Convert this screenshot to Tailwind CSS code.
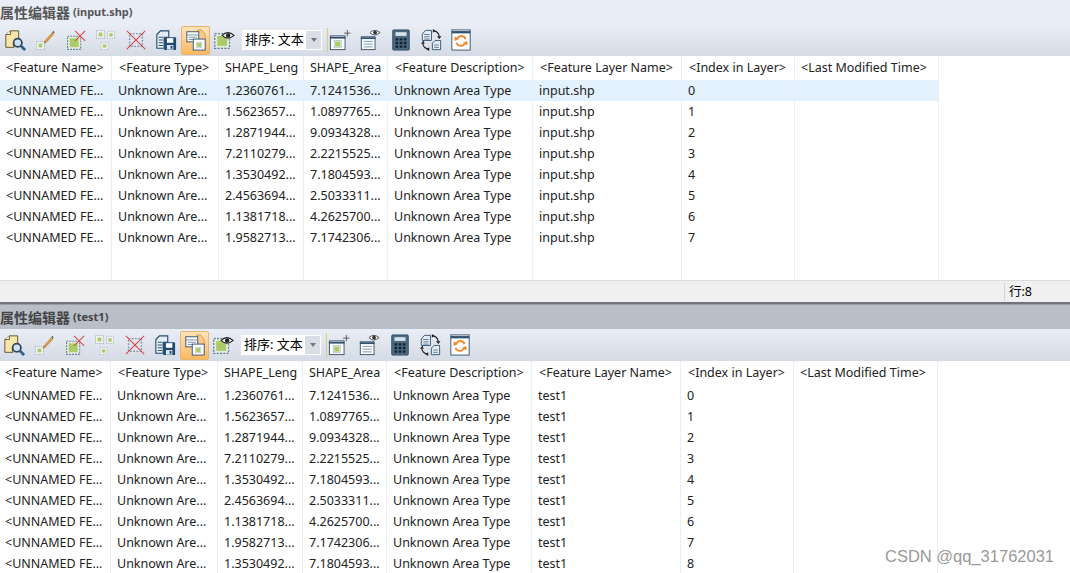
<!DOCTYPE html>
<html><head><meta charset="utf-8"><script src="https://cdn.jsdelivr.net/npm/@tailwindcss/browser@4"></script></head>
<body class="w-[1070px] h-[573px] overflow-hidden bg-white font-['Noto_Sans','Noto_Sans_CJK_SC',sans-serif] text-[12.5px] text-[#222]">
<svg class="hidden">
<symbol id="dots" viewBox="0 0 10 10"><rect x=".5" y=".5" width="9" height="9" fill="#e6ebe0" stroke="#5f7d9c" stroke-width=".8" stroke-dasharray="1.2 .8"/><rect x="2" y="2" width="6" height="6" fill="#a9cc68"/></symbol>
<symbol id="dotsl" viewBox="0 0 10 10"><rect x=".5" y=".5" width="9" height="9" fill="#eef1ea" stroke="#8aa2b8" stroke-width=".8" stroke-dasharray="1.2 .8"/><rect x="3" y="3" width="4" height="4" fill="#a9cc68"/></symbol>
<symbol id="i1" viewBox="0 0 24 24"><path d="M2 6 7 2h9v9a6 6 0 0 0-5 9H2z" fill="#f7e6a8" stroke="#5c5030"/><path d="M2 6h5V2" fill="#fdf6d8" stroke="#5c5030"/><circle cx="15" cy="15" r="4.500" fill="#cfe3f2" stroke="#33475e" stroke-width="2"/><path d="m18 18 5 5" stroke="#2d5f88" stroke-width="3"/></symbol>
<symbol id="i2" viewBox="0 0 24 24"><use href="#dotsl" x="2" y="13" width="10" height="10"/><path d="m12 13 8-9 1.500 1.500-8 9-2.500 1z" fill="#f0a23a" stroke="#8a5a20" stroke-width=".6"/><path d="m20 3.500 1-1.500 1.500 1.500-1 1.500z" fill="#555"/></symbol>
<symbol id="i3" viewBox="0 0 24 24"><use href="#dots" x="2" y="7" width="16" height="16"/><path d="m11 2 11 11M22 2 11 13" stroke="#d9454a" stroke-width="1.100"/></symbol>
<symbol id="i4" viewBox="0 0 24 24"><use href="#dotsl" x="1" y="1" width="10" height="10"/><use href="#dotsl" x="13" y="2" width="9" height="9"/><use href="#dotsl" x="6" y="14" width="9" height="9"/></symbol>
<symbol id="i5" viewBox="0 0 24 24"><rect x="5" y="5" width="14" height="14" fill="none" stroke="#7b97ae" stroke-width="1.500" stroke-dasharray="2 1.500"/><path d="m2 2 20 20M22 2 2 22" stroke="#dc3f45" stroke-width="1.100"/></symbol>
<symbol id="i6" viewBox="0 0 24 24"><path d="M2 6 6 2h9v7h-5v12H2z" fill="#e5edf4" stroke="#244a6c" stroke-width="1.200"/><path d="M4 9h5M4 12h5M4 15h5M4 18h5" stroke="#244a6c"/><rect x="10" y="9" width="13" height="14" rx="1" fill="#1f4b73"/><rect x="13" y="10" width="7" height="5" fill="#fff"/><rect x="13" y="17.500" width="7" height="5" fill="#dfe7ee"/><rect x="17" y="18.500" width="2" height="3" fill="#1f4b73"/></symbol>
<symbol id="i7" viewBox="0 0 24 24"><path d="M14 1h4l4 5v7h-8z" fill="#f8c98a" stroke="#d99a50"/><rect x="2" y="3" width="13" height="11" fill="#fff" stroke="#33516e"/><path d="M2 6.500h13M4 9h9M4 11.500h9" stroke="#6f8ea8"/><rect x="9" y="11" width="13" height="12" fill="#fff" stroke="#33516e"/><use href="#dots" x="12" y="14" width="7" height="7"/></symbol>
<symbol id="i8" viewBox="0 0 24 24"><use href="#dots" x="1" y="4" width="18" height="18"/><path d="M10 7q6-6 13 0-7 6-13 0z" fill="#fff" stroke="#222" stroke-width="1.300"/><circle cx="16.500" cy="7" r="2.400" fill="#222"/></symbol>
<symbol id="i9" viewBox="0 0 24 24"><rect x="1.500" y="7.500" width="16" height="15" fill="#fff" stroke="#33516e"/><path d="M1 9.500h17" stroke="#33516e" stroke-width="2"/><use href="#dots" x="5" y="12" width="9" height="9"/><path d="M20 1v7M16.500 4.500h7" stroke="#555"/></symbol>
<symbol id="i10" viewBox="0 0 24 24"><rect x="2.500" y="8.500" width="15" height="14" fill="#fff" stroke="#33516e"/><path d="M2 10h16" stroke="#33516e" stroke-width="2"/><path d="M5 13.500h10M5 16.500h10M5 19.500h10" stroke="#6f8ea8"/><path d="M12 4q5-5 11 0-6 5-11 0z" fill="#fff" stroke="#444"/><circle cx="17.500" cy="3.800" r="2" fill="#333"/></symbol>
<symbol id="i11" viewBox="0 0 24 24"><rect x="3" y="1" width="18" height="22" rx="1" fill="#4d6b80" stroke="#2f4a5e"/><rect x="6" y="3.500" width="12" height="4" fill="#d8e4ec"/><path d="M6 10h3v2.500H6zM10.500 10h3v2.500h-3zM15 10h3v2.500h-3zM6 14h3v2.500H6zM10.500 14h3v2.500h-3zM15 14h3v2.500h-3zM6 18h3v2.500H6zM10.500 18h3v2.500h-3zM15 18h3v2.500h-3z" fill="#10222f"/></symbol>
<symbol id="i12" viewBox="0 0 24 24"><path d="M2.500 5.500 6 1.500h6.500v11h-10z" fill="#e5edf4" stroke="#33516e"/><path d="M4.500 6h6M4.500 8.500h6M4.500 11h6" stroke="#33516e" stroke-width=".8"/><path d="M13.500 15.500l3-3h6v10h-9z" fill="#e5edf4" stroke="#33516e"/><path d="M15.500 17.500h5M15.500 20h5" stroke="#33516e" stroke-width=".8"/><path d="M15 2q5 .5 6 6M10 22q-6-.5-7-6" fill="none" stroke="#222" stroke-width="1.200"/><path d="m18.500 8 5 0-2.500 3zM1 16h4l-1-3.500zM14 0v4l3-2zM10 20v4l-3-2z" fill="#222"/></symbol>
<symbol id="i13" viewBox="0 0 24 24"><rect x="2" y="1" width="20" height="22" fill="#fff" stroke="#33516e"/><path d="M2 3.500h20" stroke="#33516e" stroke-width="2.500"/><path d="M17 11a5 5 0 0 0-9-1M7 15a5 5 0 0 0 9 1" fill="none" stroke="#f0882a" stroke-width="2"/><path d="m5 8 5 3-5 2zM19 18l-5-3 5-2z" fill="#f0882a"/></symbol>
</svg>

<!-- panel 1 -->
<section class="h-[302px] flex flex-col">
  <div class="h-[24px] bg-[#e9edf6] flex items-center font-bold text-[#555] shrink-0"><span class="text-[14px]">属性编辑器</span><span class="text-[11px] ml-[3px] pt-[1px]">(input.shp)</span></div>
  <div class="h-[32px] bg-gradient-to-b from-[#e9edf6] to-[#d5dbe5] flex items-center pl-[3px] shrink-0">
    <svg class="w-[22px] h-[22px] ml-[1px]"><use href="#i1"/></svg>
    <svg class="w-[22px] h-[22px] ml-[8px]"><use href="#i2"/></svg>
    <svg class="w-[22px] h-[22px] ml-[9px]"><use href="#i3"/></svg>
    <svg class="w-[22px] h-[22px] ml-[8px]"><use href="#i4"/></svg>
    <svg class="w-[22px] h-[22px] ml-[8px]"><use href="#i5"/></svg>
    <svg class="w-[22px] h-[22px] ml-[8px]"><use href="#i6"/></svg>
    <span class="ml-[4px] w-[29px] h-[29px] flex items-center justify-center rounded-[2px] border border-[#e8b56f] bg-gradient-to-b from-[#fde4b8] to-[#fbb95f]"><svg class="w-[22px] h-[22px] shrink-0"><use href="#i7"/></svg></span>
    <svg class="w-[22px] h-[22px] ml-[3px]"><use href="#i8"/></svg>
    <span class="ml-[7px] w-[80px] h-[20px] bg-white flex items-center justify-between pl-[3px] pr-[1px] text-[13px] text-black">排序: 文本<span class="w-[15px] h-[18px] bg-[#d9dde4] flex items-center justify-center"><span class="border-x-[3px] border-x-transparent border-t-[4px] border-t-[#777]"></span></span></span>
    <span class="ml-[5px] w-[1px] h-[24px] bg-[#d6cf6f]"></span>
    <svg class="w-[22px] h-[22px] ml-[1px]"><use href="#i9"/></svg>
    <svg class="w-[22px] h-[22px] ml-[8px]"><use href="#i10"/></svg>
    <svg class="w-[22px] h-[22px] ml-[9px]"><use href="#i11"/></svg>
    <svg class="w-[22px] h-[22px] ml-[8px]"><use href="#i12"/></svg>
    <svg class="w-[22px] h-[22px] ml-[8px]"><use href="#i13"/></svg>
  </div>
  <div class="flex-1 w-[939px] grid grid-cols-[112px_107px_85px_84px_145px_149px_113px_144px] grid-rows-[24px_repeat(8,21px)_1fr] [&>*]:border-r [&>*]:border-[#e8eff8] [&>*]:pl-[6px] [&>*]:leading-[21px] [&>*]:whitespace-nowrap [&>*]:overflow-hidden">
    <div class="leading-[24px]!">&lt;Feature Name&gt;</div><div class="leading-[24px]! pl-[7px]!">&lt;Feature Type&gt;</div><div class="leading-[24px]!">SHAPE_Leng</div><div class="leading-[24px]!">SHAPE_Area</div><div class="leading-[24px]! pl-[7px]!">&lt;Feature Description&gt;</div><div class="leading-[24px]! pl-[7px]!">&lt;Feature Layer Name&gt;</div><div class="leading-[24px]! pl-[7px]!">&lt;Index in Layer&gt;</div><div class="leading-[24px]!">&lt;Last Modified Time&gt;</div>
    <div class="bg-[#e3f1fc]">&lt;UNNAMED FE...</div><div class="bg-[#e3f1fc]">Unknown Are...</div><div class="bg-[#e3f1fc]">1.2360761...</div><div class="bg-[#e3f1fc]">7.1241536...</div><div class="bg-[#e3f1fc]">Unknown Area Type</div><div class="bg-[#e3f1fc]">input.shp</div><div class="bg-[#e3f1fc]">0</div><div class="bg-[#e3f1fc]"></div>
    <div>&lt;UNNAMED FE...</div><div>Unknown Are...</div><div>1.5623657...</div><div>1.0897765...</div><div>Unknown Area Type</div><div>input.shp</div><div>1</div><div></div>
    <div>&lt;UNNAMED FE...</div><div>Unknown Are...</div><div>1.2871944...</div><div>9.0934328...</div><div>Unknown Area Type</div><div>input.shp</div><div>2</div><div></div>
    <div>&lt;UNNAMED FE...</div><div>Unknown Are...</div><div>7.2110279...</div><div>2.2215525...</div><div>Unknown Area Type</div><div>input.shp</div><div>3</div><div></div>
    <div>&lt;UNNAMED FE...</div><div>Unknown Are...</div><div>1.3530492...</div><div>7.1804593...</div><div>Unknown Area Type</div><div>input.shp</div><div>4</div><div></div>
    <div>&lt;UNNAMED FE...</div><div>Unknown Are...</div><div>2.4563694...</div><div>2.5033311...</div><div>Unknown Area Type</div><div>input.shp</div><div>5</div><div></div>
    <div>&lt;UNNAMED FE...</div><div>Unknown Are...</div><div>1.1381718...</div><div>4.2625700...</div><div>Unknown Area Type</div><div>input.shp</div><div>6</div><div></div>
    <div>&lt;UNNAMED FE...</div><div>Unknown Are...</div><div>1.9582713...</div><div>7.1742306...</div><div>Unknown Area Type</div><div>input.shp</div><div>7</div><div></div>
    <div></div><div></div><div></div><div></div><div></div><div></div><div></div><div></div>
  </div>
  <div class="h-[22px] shrink-0 bg-[#f0f0f0] border-t border-[#dcdcdc] flex justify-end items-center pr-[4px]"><span class="w-[62px] h-[18px] border-l border-[#d4d4d4] pl-[4px] leading-[18px] text-black">行:8</span></div>
</section>
<div class="h-[3px] bg-[#6f7278] border-b border-[#9a9da3]"></div>

<!-- panel 2 -->
<section class="-ml-[1px] h-[268px] overflow-hidden flex flex-col relative">
  <div class="h-[24px] ml-[1px] bg-[#b8bfc9] flex items-center font-bold text-[#444] shrink-0"><span class="text-[14px]">属性编辑器</span><span class="text-[11px] ml-[3px] pt-[1px]">(test1)</span></div>
  <div class="h-[32px] ml-[1px] bg-gradient-to-b from-[#e9edf6] to-[#d5dbe5] flex items-center pl-[2px] shrink-0">
    <svg class="w-[22px] h-[22px] ml-[1px]"><use href="#i1"/></svg>
    <svg class="w-[22px] h-[22px] ml-[8px]"><use href="#i2"/></svg>
    <svg class="w-[22px] h-[22px] ml-[9px]"><use href="#i3"/></svg>
    <svg class="w-[22px] h-[22px] ml-[8px]"><use href="#i4"/></svg>
    <svg class="w-[22px] h-[22px] ml-[8px]"><use href="#i5"/></svg>
    <svg class="w-[22px] h-[22px] ml-[8px]"><use href="#i6"/></svg>
    <span class="ml-[4px] w-[29px] h-[29px] flex items-center justify-center rounded-[2px] border border-[#e8b56f] bg-gradient-to-b from-[#fde4b8] to-[#fbb95f]"><svg class="w-[22px] h-[22px] shrink-0"><use href="#i7"/></svg></span>
    <svg class="w-[22px] h-[22px] ml-[3px]"><use href="#i8"/></svg>
    <span class="ml-[7px] w-[80px] h-[20px] bg-white flex items-center justify-between pl-[3px] pr-[1px] text-[13px] text-black">排序: 文本<span class="w-[15px] h-[18px] bg-[#d9dde4] flex items-center justify-center"><span class="border-x-[3px] border-x-transparent border-t-[4px] border-t-[#777]"></span></span></span>
    <span class="ml-[5px] w-[1px] h-[24px] bg-[#d6cf6f]"></span>
    <svg class="w-[22px] h-[22px] ml-[1px]"><use href="#i9"/></svg>
    <svg class="w-[22px] h-[22px] ml-[8px]"><use href="#i10"/></svg>
    <svg class="w-[22px] h-[22px] ml-[9px]"><use href="#i11"/></svg>
    <svg class="w-[22px] h-[22px] ml-[8px]"><use href="#i12"/></svg>
    <svg class="w-[22px] h-[22px] ml-[8px]"><use href="#i13"/></svg>
  </div>
  <div class="w-[939px] grid grid-cols-[112px_107px_85px_84px_145px_149px_113px_144px] grid-rows-[24px_repeat(9,21px)] [&>*]:border-r [&>*]:border-[#e8eff8] [&>*]:pl-[6px] [&>*]:leading-[21px] [&>*]:whitespace-nowrap [&>*]:overflow-hidden">
    <div class="leading-[24px]!">&lt;Feature Name&gt;</div><div class="leading-[24px]! pl-[7px]!">&lt;Feature Type&gt;</div><div class="leading-[24px]!">SHAPE_Leng</div><div class="leading-[24px]!">SHAPE_Area</div><div class="leading-[24px]! pl-[7px]!">&lt;Feature Description&gt;</div><div class="leading-[24px]! pl-[7px]!">&lt;Feature Layer Name&gt;</div><div class="leading-[24px]! pl-[7px]!">&lt;Index in Layer&gt;</div><div class="leading-[24px]!">&lt;Last Modified Time&gt;</div>
    <div>&lt;UNNAMED FE...</div><div>Unknown Are...</div><div>1.2360761...</div><div>7.1241536...</div><div>Unknown Area Type</div><div>test1</div><div>0</div><div></div>
    <div>&lt;UNNAMED FE...</div><div>Unknown Are...</div><div>1.5623657...</div><div>1.0897765...</div><div>Unknown Area Type</div><div>test1</div><div>1</div><div></div>
    <div>&lt;UNNAMED FE...</div><div>Unknown Are...</div><div>1.2871944...</div><div>9.0934328...</div><div>Unknown Area Type</div><div>test1</div><div>2</div><div></div>
    <div>&lt;UNNAMED FE...</div><div>Unknown Are...</div><div>7.2110279...</div><div>2.2215525...</div><div>Unknown Area Type</div><div>test1</div><div>3</div><div></div>
    <div>&lt;UNNAMED FE...</div><div>Unknown Are...</div><div>1.3530492...</div><div>7.1804593...</div><div>Unknown Area Type</div><div>test1</div><div>4</div><div></div>
    <div>&lt;UNNAMED FE...</div><div>Unknown Are...</div><div>2.4563694...</div><div>2.5033311...</div><div>Unknown Area Type</div><div>test1</div><div>5</div><div></div>
    <div>&lt;UNNAMED FE...</div><div>Unknown Are...</div><div>1.1381718...</div><div>4.2625700...</div><div>Unknown Area Type</div><div>test1</div><div>6</div><div></div>
    <div>&lt;UNNAMED FE...</div><div>Unknown Are...</div><div>1.9582713...</div><div>7.1742306...</div><div>Unknown Area Type</div><div>test1</div><div>7</div><div></div>
    <div>&lt;UNNAMED FE...</div><div>Unknown Are...</div><div>1.3530492...</div><div>7.1804593...</div><div>Unknown Area Type</div><div>test1</div><div>8</div><div></div>
  </div>
  <span class="absolute left-[886px] top-[239px] font-['Liberation_Sans',sans-serif] text-[16.500px] text-[#999]">CSDN @qq_31762031</span>
</section>
</body></html>
